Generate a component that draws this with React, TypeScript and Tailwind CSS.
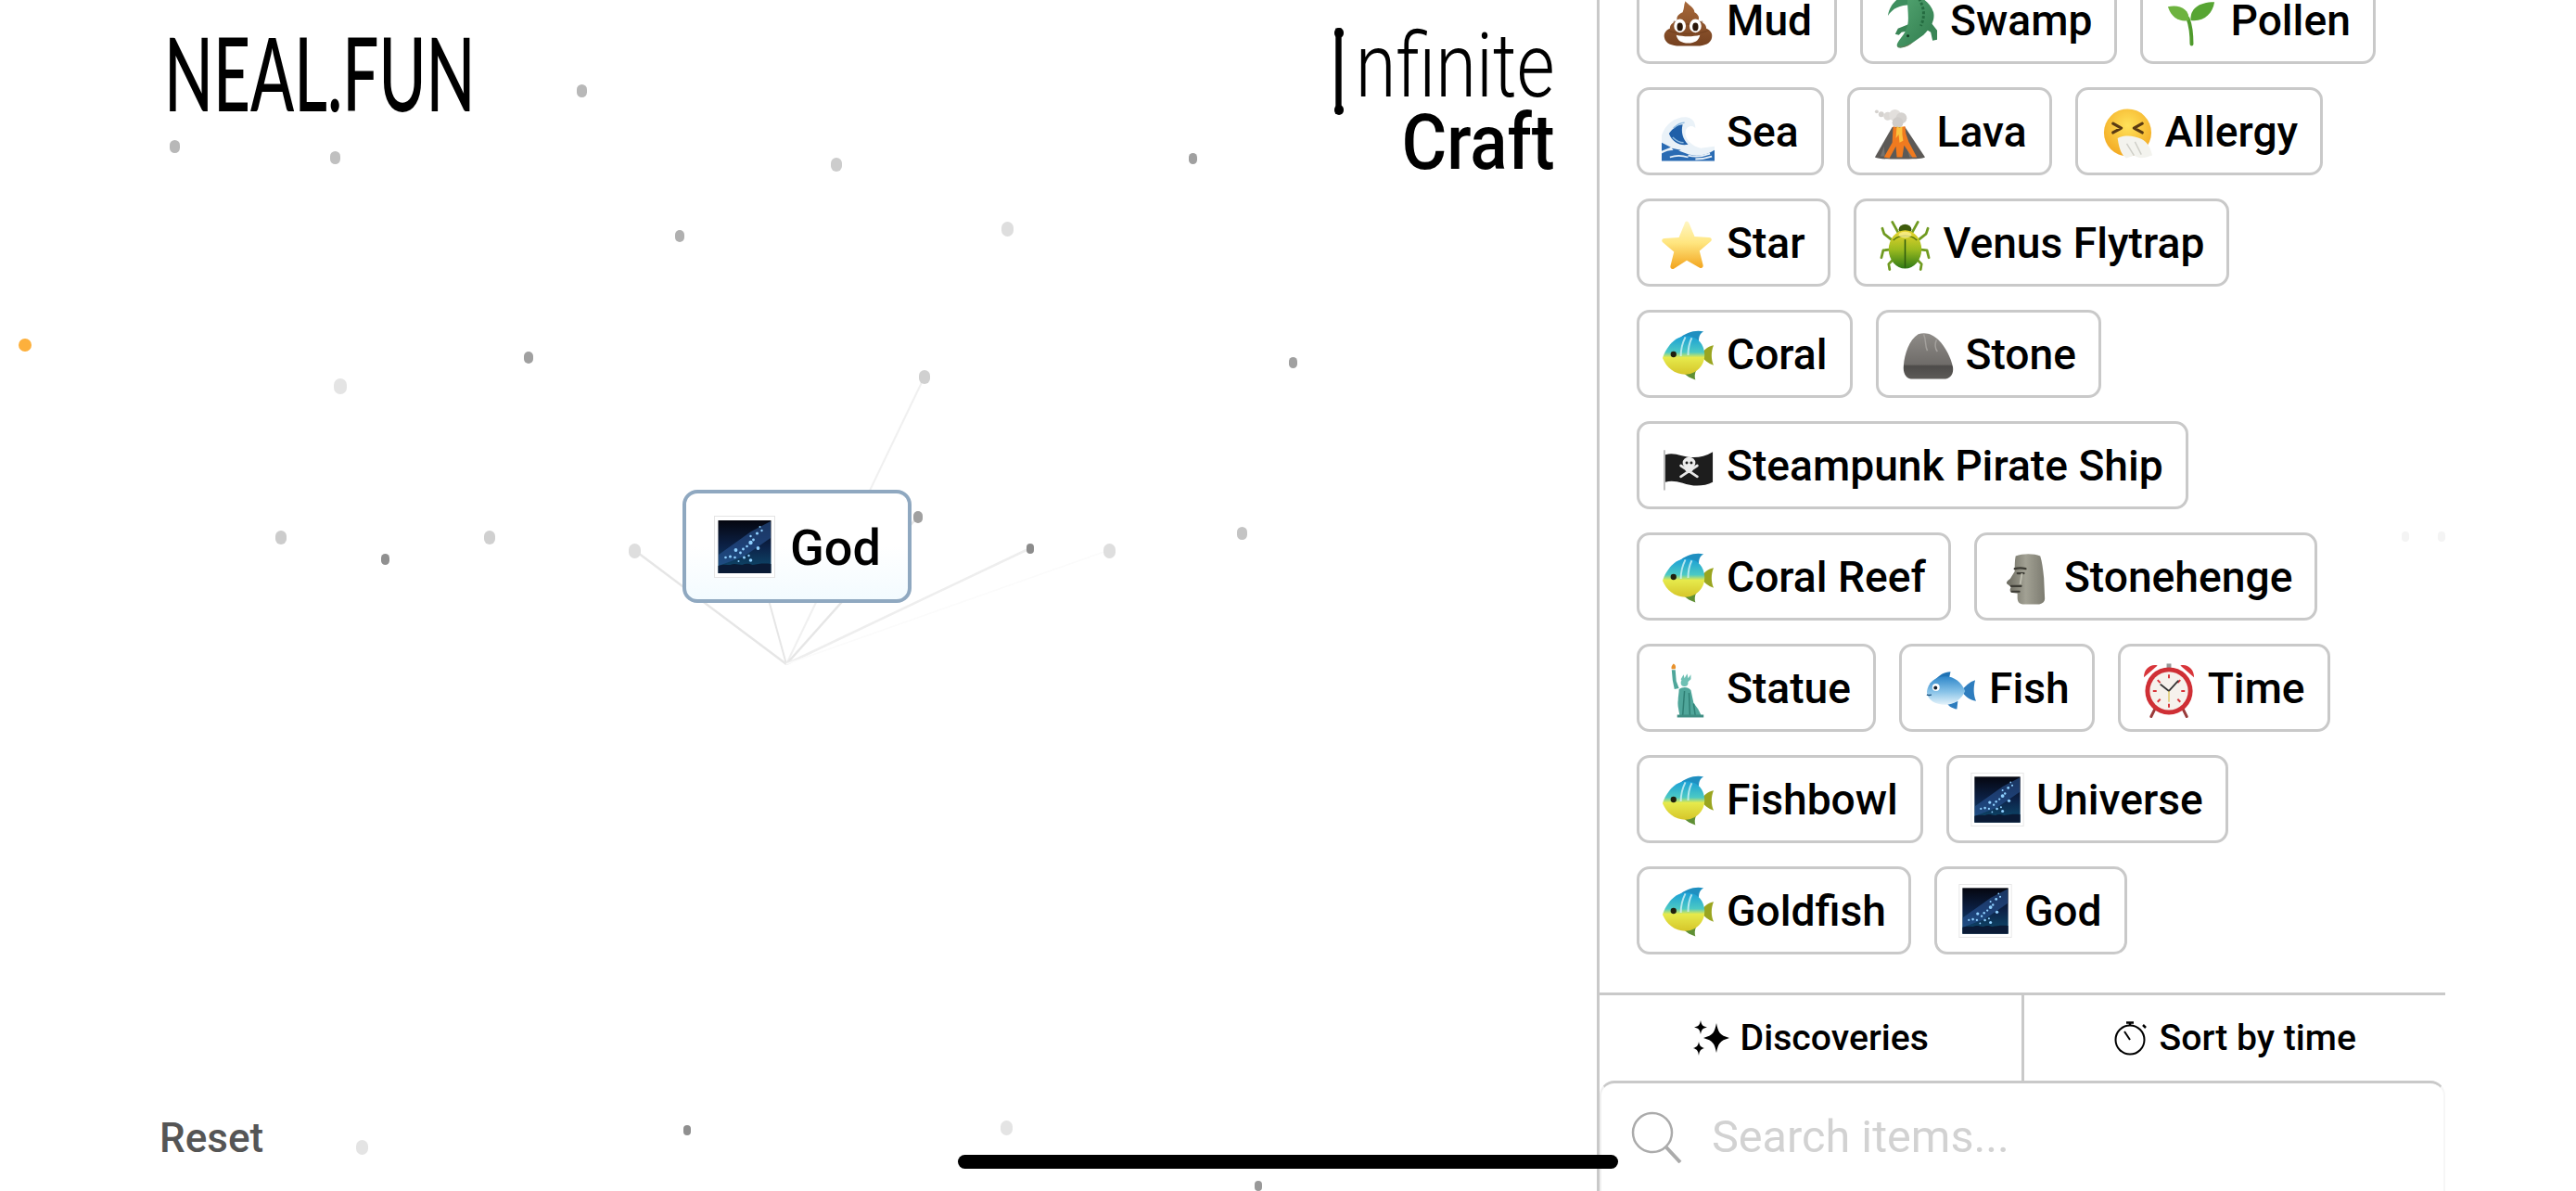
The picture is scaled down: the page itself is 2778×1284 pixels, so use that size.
import React from 'react';

// emoji drawn on a 60x60 box
const Svg: React.FC<{ children: React.ReactNode; label: string }> = ({ children, label }) => (
  <svg viewBox="0 0 60 60" role="img" aria-label={label} className="w-[59px] h-[60px] shrink-0 overflow-visible">
    {children}
  </svg>
);

const Poop = () => (
  <Svg label="poop">
    <defs>
      <linearGradient id="poop" x1="0" y1="0" x2="0" y2="1">
        <stop offset="0" stopColor="#a8693a" />
        <stop offset="1" stopColor="#754120" />
      </linearGradient>
    </defs>
    <path d="M27 9c3 4 10 7 10 12 4 2 6 6 4 9 6 2 9 5 9 9 5 2 7 6 6 10-1 6-8 9-16 9H21C12 58 5 55 4 49c-1-4 1-8 6-10 0-4 3-7 8-9-1-4 1-7 6-9 2-4 1-8 3-12z" fill="url(#poop)" />
    <path d="M14 31c8 4 24 4 32 0M8 41c12 5 32 5 44 0" stroke="#6a3a1a" strokeWidth="1.500" fill="none" opacity="0.5" />
    <ellipse cx="21" cy="36" rx="6.500" ry="7.500" fill="#fff" />
    <ellipse cx="38" cy="36" rx="6.500" ry="7.500" fill="#fff" />
    <ellipse cx="21" cy="37" rx="3.200" ry="4.500" fill="#2a1608" />
    <ellipse cx="38" cy="37" rx="3.200" ry="4.500" fill="#2a1608" />
    <path d="M17 46c8 2 18 2 26 0-1 6-6 9-13 9s-12-3-13-9z" fill="#fff" />
  </Svg>
);

const Croc = () => (
  <Svg label="crocodile">
    <defs>
      <linearGradient id="croc" x1="0" y1="0" x2="1" y2="1">
        <stop offset="0" stopColor="#55a874" />
        <stop offset="1" stopColor="#2f7a4c" />
      </linearGradient>
    </defs>
    <path d="M32 0C19 1 6 10 4 25c5-8 13-12 25-12z" fill="#3f8f60" />
    <path d="M47 27l11 14 0 10-5 1-2-9-11-7zM27 34l-12 5-3 6 4 1 3-3 11-2z" fill="#3a8556" />
    <path d="M26 3C38 1 50 9 54 21c2 9-3 17-11 25L29 56c-6 4-14 6-15 2-1-4 7-10 10-18 5-10 0-26 2-37z" fill="url(#croc)" />
    <path d="M38 6c6 10 7 20 2 30" stroke="#246b40" strokeWidth="3" fill="none" strokeDasharray="3 2" />
    <path d="M14 58c5 2 11 1 17-4l-2 2c-6 4-12 4-15 2z" fill="#a05a4a" />
    <circle cx="26" cy="47" r="1.500" fill="#143d24" />
  </Svg>
);

const Seedling = () => (
  <Svg label="seedling">
    <path d="M30 56c0-12-1-20-4-28" stroke="#4f9a2c" strokeWidth="4" fill="none" strokeLinecap="round" />
    <path d="M27 30C18 32 8 28 4 15c12-3 24 2 23 15z" fill="#6db33f" />
    <path d="M29 30c-1-12 8-20 26-20-2 13-12 22-26 20z" fill="#57a533" />
  </Svg>
);

const Wave = () => (
  <Svg label="wave">
    <path d="M1 62V34C5 22 15 14 27 14c6 0 11 4 11 12-4-4-10-2-11 4-1 8 7 16 17 18l15-2v16z" fill="#eaf2f8" />
    <path d="M9 32c4-6 10-10 15-10-2 8 0 16 6 22-8 2-17-2-21-12z" fill="#1f5fa8" />
    <path d="M1 54c9-6 19-4 27 0 10 4 22 2 31-4v12H1z" fill="#2a6bb3" />
    <path d="M1 42l10 5-10 4zM12 48l10 2-6 3z" fill="#2a6bb3" />
    <path d="M10 58c8-3 14-2 20 0M30 56c8 2 16 1 24-2M38 60c6 0 12-1 18-3" stroke="#eaf2f8" strokeWidth="1.800" fill="none" />
    <path d="M14 26c4-4 8-6 12-6M13 36c3 3 7 6 12 6" stroke="#8fbbe0" strokeWidth="1.500" fill="none" />
  </Svg>
);

const Volcano = () => (
  <Svg label="volcano">
    <circle cx="6" cy="8" r="2" fill="#d5d2cf" />
    <circle cx="11" cy="11" r="3" fill="#d5d2cf" />
    <circle cx="18" cy="13" r="4.500" fill="#dcd9d6" />
    <circle cx="26" cy="12" r="6.500" fill="#e2dfdc" />
    <circle cx="33" cy="15" r="6" fill="#d5d2cf" />
    <circle cx="29" cy="20" r="6" fill="#cfccc9" />
    <path d="M23 25h14l22 33c-5 2-12 2-29 2-14 0-22 0-26-2z" fill="#5c5956" />
    <path d="M36 36l6 22h8zM14 46l-4 11h5z" fill="#76726e" />
    <path d="M24 24c5 3 9 1 13 0l1 8 3 9 9 17h-5l-9-13-2 13h-6l-1-12-7 13-6-1 9-16z" fill="#f07a1f" />
    <path d="M28 24c2 2 4 2 6 0l0 9 1 7-4 2-1-9-3 4z" fill="#fbc23e" />
  </Svg>
);

const Sneeze = () => (
  <Svg label="sneezing face">
    <defs>
      <radialGradient id="sneeze" cx="50%" cy="35%" r="70%">
        <stop offset="0" stopColor="#ffe25a" />
        <stop offset="1" stopColor="#f2a51e" />
      </radialGradient>
    </defs>
    <circle cx="31" cy="31" r="26" fill="url(#sneeze)" />
    <path d="M15 21l9 5-9 5M47 21l-9 5 9 5" stroke="#5b3b12" strokeWidth="3.200" fill="none" strokeLinecap="round" strokeLinejoin="round" />
    <path d="M20 37c8-4 18-3 26 1 6 3 10 9 12 18-9 3-14 4-20 0l-8 3c-4-2-8-7-10-22z" fill="#f3f3ee" />
    <path d="M30 43l8 13M39 41l7 14" stroke="#cfcfc8" strokeWidth="1.500" fill="none" />
  </Svg>
);

const Star = () => (
  <Svg label="star">
    <defs>
      <linearGradient id="star" x1="0" y1="0" x2="0" y2="1">
        <stop offset="0" stopColor="#fff6c4" />
        <stop offset="0.45" stopColor="#ffe680" />
        <stop offset="1" stopColor="#f2a31c" />
      </linearGradient>
    </defs>
    <path d="M28.500 6c1.300 0 2 1 2.600 2.400l6 14.400 15.800 1.200c3 .3 3.800 2.800 1.600 4.600l-12 10 3.800 15.300c.7 3-1.500 4.500-4 3L28.500 49l-13.800 8.900c-2.500 1.500-4.700 0-4-3l3.800-15.300-12-10C.3 27.800 1.100 25.300 4.100 25l15.800-1.200 6-14.400C26.500 7 27.200 6 28.500 6z" fill="url(#star)" />
  </Svg>
);

const Beetle = () => (
  <Svg label="beetle">
    <defs>
      <linearGradient id="beetle" x1="0" y1="0" x2="0" y2="1">
        <stop offset="0" stopColor="#e8d42e" />
        <stop offset="0.5" stopColor="#9cbb1f" />
        <stop offset="1" stopColor="#2f7a16" />
      </linearGradient>
    </defs>
    <path d="M16 7l6 11M44 7l-6 11M16 27L7 20 5 14M44 27l9-7 2-6M15 37L6 38l-2 8M45 37l9 1 2 8M18 47l-6 6 1 6M42 47l6 6-1 6" stroke="#6f9a20" strokeWidth="2.800" fill="none" strokeLinecap="round" strokeLinejoin="round" />
    <ellipse cx="30" cy="15" rx="7" ry="5.500" fill="#3f5c0c" />
    <ellipse cx="30" cy="37" rx="18" ry="21" fill="url(#beetle)" />
    <path d="M17 27c3-3 8-5 13-5s10 2 13 5" stroke="#55750f" strokeWidth="1.500" fill="none" />
    <path d="M30 26v31" stroke="#2e5a0e" strokeWidth="1.500" />
    <ellipse cx="30" cy="21" rx="7" ry="3.500" fill="#fff3a0" opacity="0.7" />
  </Svg>
);

const TropicalFish = () => (
  <Svg label="tropical fish">
    <defs>
      <linearGradient id="tfish" x1="0" y1="0" x2="0" y2="1">
        <stop offset="0" stopColor="#1a9fd6" />
        <stop offset="0.42" stopColor="#4cc9c4" />
        <stop offset="0.56" stopColor="#e6ea4c" />
        <stop offset="1" stopColor="#d6c62a" />
      </linearGradient>
    </defs>
    <path d="M20 13C27 6 38 3 47 5c-4 2-6 6-5 13z" fill="#1f8fc0" />
    <path d="M44 31c3-6 8-10 14-11-3 7-3 15 0 22-6-2-11-6-14-11z" fill="#9aa520" />
    <path d="M25 50c4 1 9 0 14-3-2 4-2 8-1 11-5-2-10-4-13-8z" fill="#5f8f34" />
    <path d="M2 34c4-12 14-24 26-24 13 0 20 10 20 21 0 12-10 21-21 21C15 52 6 44 2 34z" fill="url(#tfish)" />
    <path d="M27 11c-3 6-5 13-5 21M34 12c-3 6-4 12-4 19" stroke="#d4f3f8" strokeWidth="2" fill="none" opacity="0.8" />
    <circle cx="14" cy="30" r="3.200" fill="#20200e" />
  </Svg>
);

const Rock = () => (
  <Svg label="rock">
    <defs>
      <linearGradient id="rock" x1="0" y1="0" x2="0" y2="1">
        <stop offset="0" stopColor="#8f8c88" />
        <stop offset="0.68" stopColor="#6f6c69" />
        <stop offset="0.72" stopColor="#4d4b49" />
        <stop offset="1" stopColor="#5d5b58" />
      </linearGradient>
    </defs>
    <path d="M20 8c8-3 16 0 22 6 8 8 14 20 16 30 1 7-2 12-8 13H12c-6-1-9-7-8-15 1-12 6-28 16-34z" fill="url(#rock)" />
    <path d="M26 8c3 7 1 12 4 18M40 14c-2 5-2 9 1 13" stroke="#a3a09c" strokeWidth="1.500" fill="none" />
  </Svg>
);

const PirateFlag = () => (
  <Svg label="pirate flag">
    <path d="M4 13v44" stroke="#aaa" strokeWidth="1.500" />
    <path d="M5 18c6-2 11-1 18 1 12 3 22 3 34-4v33c-10 5-22 5-33 1-7-2-13-3-19-1z" fill="#1d1d1d" />
    <path d="M22 42l18-12M22 30l18 12" stroke="#e9e9e9" strokeWidth="2.800" strokeLinecap="round" />
    <ellipse cx="31" cy="27" rx="7" ry="6.500" fill="#ededed" />
    <rect x="27" y="31" width="8" height="5" rx="1" fill="#ededed" />
    <circle cx="28.500" cy="27" r="1.500" fill="#1d1d1d" />
    <circle cx="33.500" cy="27" r="1.500" fill="#1d1d1d" />
  </Svg>
);

const Moai = () => (
  <Svg label="moai">
    <defs>
      <linearGradient id="moai" x1="0" y1="0" x2="1" y2="0">
        <stop offset="0" stopColor="#6a695e" />
        <stop offset="0.5" stopColor="#a2a194" />
        <stop offset="1" stopColor="#7c7b70" />
      </linearGradient>
    </defs>
    <path d="M19 7c8-3 20-3 27 0 2 6 3 14 4 24l1 23c0 3-2 5-6 6H27c-4 0-6-3-6-7v-5l-7-1c-2-2-1-4 0-6l-4-3c-2-2 0-4 3-6l5-8c0-6 0-12 1-17z" fill="url(#moai)" />
    <path d="M18 21c4-1 8-1 12 0M21 26h7M14 40h11M15 46h8" stroke="#3c3b34" strokeWidth="2.200" fill="none" strokeLinecap="round" />
    <path d="M26 26l-2 12" stroke="#bdbcae" strokeWidth="2" />
  </Svg>
);

const Statue = () => (
  <Svg label="statue of liberty">
    <path d="M14 3c2 1 3 3 2 6h-4c-1-2 0-4 2-6z" fill="#e8912c" />
    <path d="M12 10h4l1 12 3 8-5 1-2-10z" fill="#4fa69a" />
    <path d="M22 20l3-5 1 4 3-5 1 5 3-4 0 5-3 3h-6z" fill="#6fc0b4" />
    <circle cx="26" cy="24" r="4" fill="#6fc0b4" />
    <path d="M20 31c4-3 10-3 13 1l3 14 5 7 4 8H21c-1-6-3-12-2-18 0-4 1-8 1-12z" fill="#4fa69a" />
    <path d="M26 33l-2 28M31 35l1 26M36 47l2 14" stroke="#2f7f74" strokeWidth="1.500" fill="none" />
    <rect x="18" y="59" width="29" height="3" fill="#3f8e83" />
  </Svg>
);

const Fish = () => (
  <Svg label="fish">
    <defs>
      <linearGradient id="fish" x1="0" y1="0" x2="0" y2="1">
        <stop offset="0" stopColor="#2e86c9" />
        <stop offset="0.55" stopColor="#88c3e8" />
        <stop offset="1" stopColor="#e4f2fa" />
      </linearGradient>
    </defs>
    <path d="M13 21c4-5 10-9 17-9l-2 9z" fill="#1f72b4" />
    <path d="M42 33c4-6 9-10 15-12-2 8-2 16 1 23-7-1-12-5-16-11z" fill="#2e7dbe" />
    <path d="M26 46c4 1 8 0 12-2l-1 9c-5-1-9-3-11-7z" fill="#2e7dbe" />
    <path d="M4 34c1-10 9-17 20-17 10 0 18 6 22 16-4 9-12 15-22 15C13 48 5 43 4 34z" fill="url(#fish)" />
    <circle cx="14" cy="29" r="4" fill="#fff" />
    <circle cx="13.500" cy="29.500" r="2" fill="#16222e" />
    <path d="M4 37c2 1 3 1 5 0" stroke="#16507e" strokeWidth="1.500" fill="none" />
  </Svg>
);

const AlarmClock = () => (
  <Svg label="alarm clock">
    <path d="M15 51l-5 10M44 51l5 10" stroke="#9a3b3b" strokeWidth="3" strokeLinecap="round" />
    <path d="M2 18C2 9 9 3 17 5z" fill="#d8353a" />
    <path d="M57 18c0-9-7-15-15-13z" fill="#d8353a" />
    <rect x="27" y="3" width="5" height="6" fill="#999" />
    <circle cx="29.500" cy="33" r="26" fill="#cf2f35" />
    <circle cx="29.500" cy="33" r="21" fill="#f6f1ec" />
    <path d="M29.500 15v4M29.500 47v4M12 33h4M43 33h4M17 21l3 3M42 21l-3 3M17 45l3-3M42 45l-3-3" stroke="#d8353a" strokeWidth="2" />
    <path d="M29.500 33l-9-7M29.500 33l10-11" stroke="#333" strokeWidth="1.800" strokeLinecap="round" />
    <path d="M29.500 33v12" stroke="#d9c04a" strokeWidth="1.200" />
  </Svg>
);

// the milky way night sky picture, on a white card
const MILKY_STARS: [number, number, number][] = [
  [45, 7, 1], [42, 14, 1.600], [47, 11, 1.200], [35, 17, 1.200], [38, 21, 1.400], [35, 24, 2.200], [43, 30, 1.900], [31, 28, 1.300],
  [27, 31, 1.400], [19, 32, 1.900], [24, 35, 1.400], [13, 39, 1.500], [18, 40, 1.300], [8, 40, 1.300], [28, 40, 1.500], [33, 38, 1.200],
  [35, 43, 1.800], [22, 44, 1],
];

const MilkyWay: React.FC<{ className: string }> = ({ className }) => (
  <svg viewBox="0 0 66 67" role="img" aria-label="milky way" className={className}>
    <defs>
      <linearGradient id="milky" x1="0" y1="0" x2="0" y2="1">
        <stop offset="0" stopColor="#05060f" />
        <stop offset="0.5" stopColor="#0c2248" />
        <stop offset="1" stopColor="#0e4f70" />
      </linearGradient>
    </defs>
    <rect x="0.500" y="0.500" width="65" height="66" fill="#fff" stroke="#e4e4e4" />
    <rect x="4.500" y="5" width="57" height="57" fill="url(#milky)" />
    <path d="M5 42L40 17l21-11v18L32 44 5 54z" fill="#2a5596" opacity="0.6" />
    <path d="M4.500 54c5-2 9-1 13-1 5-2 9 0 13 0 4-2 8-1 11 0 6-1 12-2 20-1v10h-57z" fill="#0a1a35" />
    {MILKY_STARS.map(([x, y, r], i) => (
      <circle key={i} cx={x + 4.500} cy={y + 5} r={r} fill="#8fd0ff" />
    ))}
  </svg>
);

const SidebarMilkyWay = () => <MilkyWay className="w-[58px] h-[58px] mr-[1px] shrink-0" />;

const ITEMS: { name: string; Icon: React.FC }[] = [
  { name: 'Mud', Icon: Poop },
  { name: 'Swamp', Icon: Croc },
  { name: 'Pollen', Icon: Seedling },
  { name: 'Sea', Icon: Wave },
  { name: 'Lava', Icon: Volcano },
  { name: 'Allergy', Icon: Sneeze },
  { name: 'Star', Icon: Star },
  { name: 'Venus Flytrap', Icon: Beetle },
  { name: 'Coral', Icon: TropicalFish },
  { name: 'Stone', Icon: Rock },
  { name: 'Steampunk Pirate Ship', Icon: PirateFlag },
  { name: 'Coral Reef', Icon: TropicalFish },
  { name: 'Stonehenge', Icon: Moai },
  { name: 'Statue', Icon: Statue },
  { name: 'Fish', Icon: Fish },
  { name: 'Time', Icon: AlarmClock },
  { name: 'Fishbowl', Icon: TropicalFish },
  { name: 'Universe', Icon: SidebarMilkyWay },
  { name: 'Goldfish', Icon: TropicalFish },
  { name: 'God', Icon: SidebarMilkyWay },
];

// background particles: x, y, size, colour
const DOTS: [number, number, number, string][] = [
  [627, 97, 11, '#b8b8b8'],
  [188, 157, 11, '#b8b8b8'],
  [361, 169, 11, '#c0c0c0'],
  [902, 177, 12, '#cccccc'],
  [1286, 170, 9, '#a0a0a0'],
  [733, 254, 10, '#b0b0b0'],
  [1086, 246, 13, '#dedede'],
  [570, 385, 10, '#a0a0a0'],
  [367, 416, 14, '#e4e4e4'],
  [997, 406, 12, '#d0d0d0'],
  [1394, 390, 9, '#a0a0a0'],
  [303, 579, 12, '#cccccc'],
  [415, 602, 9, '#909090'],
  [528, 579, 12, '#d0d0d0'],
  [684, 593, 13, '#dedede'],
  [990, 557, 10, '#a0a0a0'],
  [1111, 591, 8, '#8c8c8c'],
  [1196, 593, 13, '#dedede'],
  [1339, 574, 11, '#c4c4c4'],
  [390, 1236, 13, '#e4e4e4'],
  [741, 1218, 8, '#8f8f8f'],
  [1085, 1215, 13, '#e4e4e4'],
  [1357, 1278, 8, '#999999'],
  [2594, 578, 8, '#f4f4f4'],
  [2633, 578, 8, '#f4f4f4'],
];

const ItemChip: React.FC<{ name: string; Icon: React.FC }> = ({ name, Icon }) => (
  <div className="flex items-center h-[95px] pl-[23px] pr-[24px] gap-[12px] bg-white border-[3px] border-[#c9c9c9] rounded-[14px] whitespace-nowrap text-[46.200px] font-medium text-black">
    <Icon />
    <span className="pt-[3px]">{name}</span>
  </div>
);

export default function App() {
  return (
    <div className="relative flex w-[2778px] h-[1284px] overflow-hidden bg-white font-['Roboto',sans-serif]">
      {DOTS.map(([x, y, size, color], i) => (
        <span
          key={i}
          className="absolute z-10 rounded-full"
          style={{ left: x - size / 2, top: y - size / 2 - 1, width: size, height: size + 3, backgroundColor: color }}
        />
      ))}

      {/* Canvas */}
      <div className="relative w-[1722px] shrink-0">
        <span className="absolute left-[20px] top-[365px] w-[14px] h-[14px] rounded-full bg-[#fdb03c]" />

        {/* lines from the instance to its neighbours */}
        <svg className="absolute inset-0 w-full h-full" viewBox="0 0 1722 1284" fill="none">
          <path d="M848 716L684 593" stroke="#e6e6e6" strokeWidth="2.500" />
          <path d="M848 716L805 560" stroke="#e6e6e6" strokeWidth="2" />
          <path d="M848 716L997 406" stroke="#f0f0f0" strokeWidth="2" />
          <path d="M848 716L990 557" stroke="#e6e6e6" strokeWidth="2.500" />
          <path d="M848 716L1111 591" stroke="#eeeeee" strokeWidth="2.500" />
          <path d="M848 716L1196 593" stroke="#fbfbfb" strokeWidth="1.500" />
        </svg>

        <div className="absolute left-[177px] top-[12px] origin-left scale-x-[0.63] font-['Lato',sans-serif] font-medium text-[110px] leading-[130px] text-black whitespace-nowrap">
          NEAL.FUN
        </div>

        <div className="absolute right-[45px] top-[29px] flex flex-col items-end text-black">
          <div className="origin-right scale-x-[0.82] font-light text-[97px] leading-[84px] whitespace-nowrap">
            <span className="font-light text-[130px] leading-[0] mr-[5px] align-[-19px]">I</span>nfinite
          </div>
          <div className="origin-right scale-x-[0.9] font-medium text-[83px] leading-[70px] mt-[6px] whitespace-nowrap">Craft</div>
        </div>
        <span className="absolute left-[1439px] top-[30px] w-[10px] h-[11px] rounded-full bg-black" />
        <span className="absolute left-[1439px] top-[113px] w-[10px] h-[11px] rounded-full bg-black" />

        {/* Dropped element */}
        <div className="absolute left-[736px] top-[528px] flex items-center w-[247px] h-[122px] pl-[30px] gap-[16px] border-[4px] border-[#8fa8c0] rounded-[16px] bg-gradient-to-b from-white from-50% to-[#f3fbff] text-[54px] font-medium text-black">
          <MilkyWay className="w-[66px] h-[67px] shrink-0" />
          <span className="pt-[2px]">God</span>
        </div>

        <div className="absolute left-[172px] top-[1200px] text-[44px] leading-[54px] font-medium text-[#555555]">Reset</div>
      </div>

      {/* Sidebar */}
      <aside className="relative flex flex-col w-[915px] h-full shrink-0 border-l-[3px] border-[#c9c9c9] bg-white">
        <div className="flex-1 min-h-0 flex flex-col justify-end overflow-hidden pl-[40px] pb-[41px]">
          <div className="flex flex-wrap gap-x-[25px] gap-y-[25px]">
            {ITEMS.map((item) => (
              <ItemChip key={item.name} name={item.name} Icon={item.Icon} />
            ))}
          </div>
        </div>

        <div className="flex h-[95px] shrink-0 border-t-[3px] border-[#c9c9c9] text-[39.200px] font-medium text-black">
          <div className="flex flex-1 items-center justify-center gap-[12px] border-r-[3px] border-[#c9c9c9]">
            <svg viewBox="0 0 40 38" className="w-[40px] h-[38px]" aria-hidden="true">
              <path d="M26 3c2 10 3.500 13 14 16-10.500 3-12 6-14 16-2-10-3.500-13-14-16 10.500-3 12-6 14-16z" fill="#000" />
              <path d="M9 0c1 5 2 6.500 7 7.500-5 1-6 2.500-7 7.500-1-5-2-6.500-7-7.500 5-1 6-2.500 7-7.500z" fill="#000" />
              <path d="M7 23c.8 4 1.500 5.500 6 7-4.500 1.500-5.200 3-6 8-.8-5-1.500-6.500-6-8 4.500-1.500 5.200-3 6-7z" fill="#000" />
            </svg>
            <span>Discoveries</span>
          </div>
          <div className="flex flex-1 items-center justify-center gap-[12px]">
            <svg viewBox="0 0 38 38" className="w-[38px] h-[38px]" fill="none" stroke="#000" aria-hidden="true">
              <circle cx="18" cy="21" r="15.500" strokeWidth="2" />
              <path d="M14 2.500h8M18 3v3" strokeWidth="2.500" />
              <path d="M32 5l3 3" strokeWidth="2.500" />
              <path d="M12 12l6 9" strokeWidth="2" />
            </svg>
            <span>Sort by time</span>
          </div>
        </div>

        <div className="flex items-center h-[119px] shrink-0 pl-[32px] gap-[31px] border-t-[3px] border-l-[2px] border-r-[2px] border-t-[#c9c9c9] border-l-[#f0f0f0] border-r-[#f6f6f6] rounded-t-[16px] text-[48.600px] text-[#d2d2d2]">
          <svg viewBox="0 0 56 56" className="w-[56px] h-[56px] shrink-0" fill="none" aria-hidden="true">
            <circle cx="23" cy="23" r="21" stroke="#ababab" strokeWidth="2.500" />
            <path d="M38 39l15 16" stroke="#ababab" strokeWidth="4" />
          </svg>
          <span>Search items...</span>
        </div>
      </aside>

      <div className="flex-1" />

      {/* iOS home indicator */}
      <div className="absolute z-20 left-[1033px] top-[1245px] w-[712px] h-[15px] rounded-full bg-black" />
    </div>
  );
}
